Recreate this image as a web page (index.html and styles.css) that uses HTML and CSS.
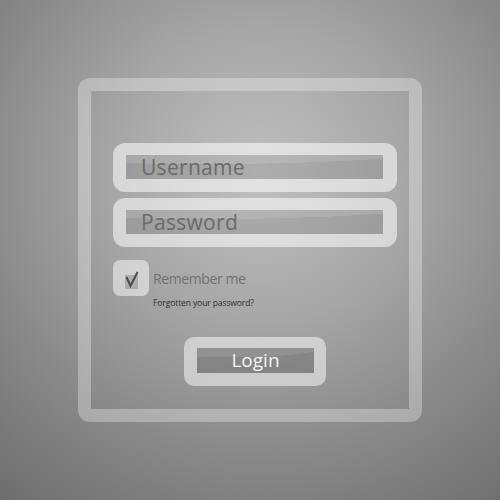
FILE: index.html
```html
<!DOCTYPE html>
<html>
<head>
<meta charset="utf-8">
<link rel="stylesheet" href="styles.css">
</head>
<body>
<div class="page">
  <div class="frame">
    <div class="field"><div class="field-inner">Username</div></div>
    <div class="field second"><div class="field-inner">Password</div></div>
    <div class="remember">
      <div class="checkbox">
        <div class="check-inner">
          <svg width="16" height="18" viewBox="0 0 16 18"><path d="M1.5 6 L5.5 15 L12.5 1" fill="none" stroke="#4a4a4a" stroke-width="2" stroke-linejoin="miter"/></svg>
        </div>
      </div>
      <span class="remember-text">Remember me</span>
    </div>
    <div class="forgot">Forgotten your password?</div>
    <div class="login"><div class="login-inner">Login</div></div>
  </div>
</div>
</body>
</html>
```
FILE: styles.css
```css
html, body {
  margin: 0;
  padding: 0;
}
.page {
  width: 500px;
  height: 500px;
  box-sizing: border-box;
  padding: 78px 0 0 78px;
  background: radial-gradient(ellipse 85% 85% at 52% 35%, #c0c0c0 0%, #a6a6a6 35%, #8a8a8a 65%, #6c6c6c 100%);
  font-family: "Open Sans", "DejaVu Sans", sans-serif;
  overflow: hidden;
}
.frame {
  width: 344px;
  height: 344px;
  box-sizing: border-box;
  border: 13px solid rgba(255, 255, 255, 0.3);
  border-radius: 12px;
  padding: 52px 0 0 22px;
}
.field {
  width: 284px;
  height: 49px;
  box-sizing: border-box;
  border-style: solid;
  border-color: rgba(255, 255, 255, 0.55);
  border-width: 12px 14px 13px 13px;
  border-radius: 12px;
}
.field.second {
  margin-top: 6px;
}
.field-inner {
  height: 24px;
  line-height: 24px;
  padding-left: 15px;
  font-size: 21px;
  letter-spacing: 0.3px;
  color: #6a6a6a;
  background:
    radial-gradient(ellipse 140% 110% at 30% -40%, rgba(255,255,255,0.12) 0 70%, rgba(255,255,255,0) 71%),
    rgba(120, 120, 120, 0.25);
}
.remember {
  display: flex;
  align-items: center;
  margin-top: 13px;
}
.checkbox {
  width: 36px;
  height: 36px;
  border-radius: 7px;
  background: rgba(255, 255, 255, 0.5);
  display: flex;
  align-items: center;
  justify-content: center;
}
.check-inner {
  width: 13px;
  height: 14px;
  background: rgba(110, 110, 110, 0.35);
  margin: 8px 0 0 0;
  position: relative;
}
.check-inner svg {
  position: absolute;
  left: 0;
  top: -4px;
}
.remember-text {
  margin-left: 4px;
  font-size: 14px;
  letter-spacing: -0.4px;
  color: #707070;
}
.forgot {
  margin: 1px 0 0 40px;
  font-size: 8.5px;
  line-height: 12px;
  letter-spacing: -0.1px;
  color: #2e2e2e;
}
.login {
  margin: 28px 0 0 71px;
  width: 142px;
  height: 49px;
  box-sizing: border-box;
  border-style: solid;
  border-color: rgba(255, 255, 255, 0.5);
  border-width: 11px 12px 13px 13px;
  border-radius: 10px;
}
.login-inner {
  height: 25px;
  line-height: 24px;
  text-align: center;
  font-size: 19px;
  color: #f4f4f4;
  background:
    radial-gradient(ellipse 140% 110% at 30% -40%, rgba(255,255,255,0.1) 0 70%, rgba(255,255,255,0) 71%),
    rgba(90, 90, 90, 0.35);
}
```
